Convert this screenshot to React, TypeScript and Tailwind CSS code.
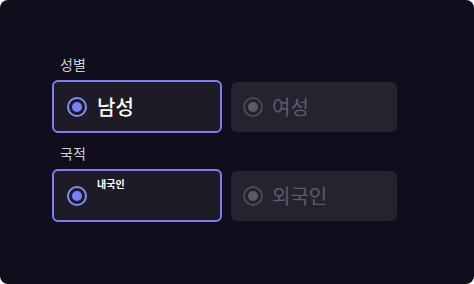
import { FC } from 'react';

type RadioProps = { active: boolean };

const RadioDot: FC<RadioProps> = ({ active }) => (
  <span
    className={
      'flex h-[20px] w-[20px] shrink-0 items-center justify-center rounded-full border-2 ' +
      (active ? 'border-[#878bf6]' : 'border-[#4b4957]')
    }
  >
    <span className={'h-[10px] w-[10px] rounded-full ' + (active ? 'bg-[#7b80f8]' : 'bg-[#5c5a67]')} />
  </span>
);

const SelectedCard: FC<{ label: string; small?: boolean }> = ({ label, small }) => (
  <div
    className={
      'flex h-[53px] w-[170px] gap-[10px] rounded-[6px] border-2 border-[#7c7ff0] bg-[#1d1b26] pl-[13px] ' +
      (small ? 'items-start' : 'items-center')
    }
  >
    <span className={small ? 'self-center' : ''}>
      <RadioDot active />
    </span>
    {small ? (
      <span className="pt-[6px] text-[10px] font-bold leading-[14px] text-white">{label}</span>
    ) : (
      <span className="text-[20px] font-medium leading-[28px] text-white">{label}</span>
    )}
  </div>
);

const DisabledCard: FC<{ label: string }> = ({ label }) => (
  <div className="flex h-[50px] w-[166px] items-center gap-[9px] rounded-[6px] bg-[#25232f] pl-[12px]">
    <RadioDot active={false} />
    <span className="text-[20px] leading-[28px] text-[#5e5b69]">{label}</span>
  </div>
);

export default function App() {
  return (
    <div
      className="h-[284px] w-[474px] overflow-hidden rounded-[8px] bg-[#100e1c] pl-[52px] pt-[54px]"
      style={{ fontFamily: '"Noto Sans CJK KR", "Noto Sans", sans-serif' }}
    >
      <div className="mb-[6px] pl-[8px] text-[14px] leading-[20px] text-[#cfcdd6]">성별</div>
      <div className="flex items-center gap-[9px]">
        <SelectedCard label="남성" />
        <DisabledCard label="여성" />
      </div>

      <div className="mb-[6px] mt-[10px] pl-[8px] text-[14px] leading-[20px] text-[#cfcdd6]">국적</div>
      <div className="flex items-center gap-[9px]">
        <SelectedCard label="내국인" small />
        <DisabledCard label="외국인" />
      </div>
    </div>
  );
}
